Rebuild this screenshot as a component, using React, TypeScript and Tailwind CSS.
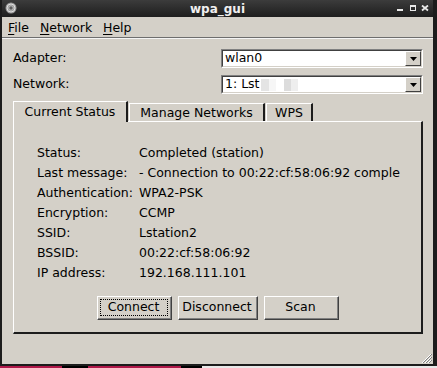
const ROWS = [
  { label: "Status:", value: "Completed (station)" },
  { label: "Last message:", value: "- Connection to 00:22:cf:58:06:92 comple" },
  { label: "Authentication:", value: "WPA2-PSK" },
  { label: "Encryption:", value: "CCMP" },
  { label: "SSID:", value: "Lstation2" },
  { label: "BSSID:", value: "00:22:cf:58:06:92" },
  { label: "IP address:", value: "192.168.111.101" },
];

const FONT = "font-['DejaVu_Sans',sans-serif]";

function Combo({ children }: { children: React.ReactNode }) {
  return (
    <div className="h-[19px] w-[202px] shrink-0 border-t border-l border-[#808080] border-b border-r border-b-white border-r-white">
      <div className="flex h-full border-t border-l border-[#404040] border-b border-r border-b-[#d4d0c8] border-r-[#d4d0c8] bg-white">
        <div className="flex flex-1 items-center overflow-hidden pl-[2px] text-[12.5px] leading-none text-black">
          {children}
        </div>
        <div className="flex w-[16px] items-center justify-center border-t border-l border-white border-b border-r border-b-[#404040] border-r-[#404040] bg-[#d4d0c8]">
          <svg width="7" height="4" viewBox="0 0 7 4">
            <path d="M0 0h7L3.5 4z" fill="#000" />
          </svg>
        </div>
      </div>
    </div>
  );
}

function Button({ label, w, focus }: { label: string; w: string; focus?: boolean }) {
  return (
    <div className={`${w} h-[24px] border-t border-l border-white border-b border-r border-b-[#404040] border-r-[#404040]`}>
      <div className="h-full border-b border-r border-[#808080] p-[2px]">
        <div
          className={`flex h-full items-center justify-center text-[12.5px] leading-none text-black ${
            focus ? "border border-dotted border-black" : "border border-transparent"
          }`}
        >
          {label}
        </div>
      </div>
    </div>
  );
}

export default function App() {
  return (
    <div className={`relative h-[368px] w-[437px] overflow-hidden bg-black ${FONT}`}>
      <div className="flex h-[366px] flex-col border-l-2 border-r-4 border-b-2 border-[#1c1c1c] bg-[#d4d0c8]">
        {/* title bar */}
        <div className="relative flex h-[17px] shrink-0 items-center justify-center bg-gradient-to-b from-[#3c3c3c] to-[#1e1e1e]">
          <svg className="absolute left-[3px] top-[2px]" width="12" height="12" viewBox="0 0 12 12">
            <circle cx="6" cy="6" r="5.5" fill="#9a9a9a" />
            <circle cx="6" cy="6" r="4" fill="none" stroke="#e0e0e0" strokeWidth="1" />
            <circle cx="6" cy="6" r="2.2" fill="#5e5e5e" stroke="#cfcfcf" strokeWidth="0.8" />
          </svg>
          <span className="text-[12px] font-bold leading-none text-[#f0f0f0]">wpa_gui</span>
          <svg className="absolute right-[3px] top-[5px]" width="33" height="7" viewBox="0 0 33 7">
            <rect x="0" y="4" width="6" height="2" fill="#e8e8e8" />
            <rect x="13.5" y="0.5" width="5" height="5" fill="none" stroke="#e8e8e8" strokeWidth="1" />
            <rect x="13" y="0" width="6" height="2" fill="#e8e8e8" />
            <path d="M25 0.5l6 5M31 0.5l-6 5" stroke="#e8e8e8" strokeWidth="1.8" />
          </svg>
        </div>

        {/* menu bar */}
        <div className="flex h-[20px] shrink-0 items-center pl-[6px] pt-[3px] text-[12.5px] leading-none text-black">
          <span className="w-[32px]">
            <span className="underline underline-offset-2">F</span>ile
          </span>
          <span className="w-[63px]">
            <span className="underline underline-offset-2">N</span>etwork
          </span>
          <span>
            <span className="underline underline-offset-2">H</span>elp
          </span>
        </div>
        <div className="h-px shrink-0 bg-[#6e6e6e]" />
        <div className="h-px shrink-0 bg-[#f4f4f4]" />

        {/* adapter / network */}
        <div className="mt-[10px] flex flex-col gap-[7px] pl-[11px] pr-[10px] text-[12.5px] leading-none text-black">
          <div className="flex h-[19px] items-center justify-between">
            <span>Adapter:</span>
            <Combo>wlan0</Combo>
          </div>
          <div className="flex h-[19px] items-center justify-between">
            <span>Network:</span>
            <Combo>
              <span>1: Lst</span>
              <span className="ml-[1px] inline-block h-[12px] w-[8px] bg-[#e4e4e4]" />
              <span className="inline-block h-[12px] w-[7px] bg-[#f6f6f6]" />
              <span className="inline-block h-[12px] w-[8px] bg-white" />
              <span className="inline-block h-[12px] w-[7px] bg-[#dcdcdc]" />
              <span className="inline-block h-[12px] w-[7px] bg-[#eeeeee]" />
            </Combo>
          </div>
        </div>

        {/* tabs */}
        <div className="mt-[7px] flex flex-col pl-[11px] pr-[10px]">
          <div className="flex items-end text-[12.5px] leading-none text-black">
            <div className="relative z-10 -mb-px flex h-[21px] w-[115px] items-center justify-center border-t border-l border-white border-r-2 border-r-[#1c1c1c] bg-[#d4d0c8]">
              Current Status
            </div>
            <div className="ml-px flex h-[18px] w-[136px] items-center justify-center border-t border-l border-white border-r-2 border-r-[#1c1c1c] pt-[2px]">
              Manage Networks
            </div>
            <div className="ml-px flex h-[18px] w-[47px] items-center justify-center border-t border-l border-white border-r-2 border-r-[#1c1c1c] pt-[2px]">
              WPS
            </div>
          </div>
          <div className="h-[213px] border-t border-l border-white border-r-2 border-b-2 border-r-[#1c1c1c] border-b-[#1c1c1c]">
            <div className="flex flex-col pl-[23px] pt-[21px] text-[12.5px] leading-none text-black">
              {ROWS.map((r) => (
                <div key={r.label} className="flex h-[20px] items-center">
                  <span className="w-[102px] shrink-0">{r.label}</span>
                  <span className="whitespace-nowrap">{r.value}</span>
                </div>
              ))}
            </div>
            <div className="mt-[13px] flex justify-center gap-[6px]">
              <Button label="Connect" w="w-[75px]" focus />
              <Button label="Disconnect" w="w-[80px]" />
              <Button label="Scan" w="w-[75px]" />
            </div>
          </div>
        </div>

        {/* size grip */}
        <svg className="absolute bottom-[4px] right-[5px]" width="11" height="11" viewBox="0 0 11 11">
          <path d="M10 1L1 10M10 4L4 10M10 7L7 10" stroke="#ffffff" strokeWidth="1" />
          <path d="M11 1L2 10M11 4L5 10M11 7L8 10" stroke="#808080" strokeWidth="1" />
        </svg>
      </div>

      {/* taskbar strip */}
      <div className="flex h-[2px]">
        <div className="w-[62px] bg-[#b0184a]" />
        <div className="w-[26px] bg-black" />
        <div className="w-[93px] bg-[#b0184a]" />
        <div className="w-[21px] bg-black" />
        <div className="flex-1 bg-[#e8e8e8]" />
      </div>
    </div>
  );
}
